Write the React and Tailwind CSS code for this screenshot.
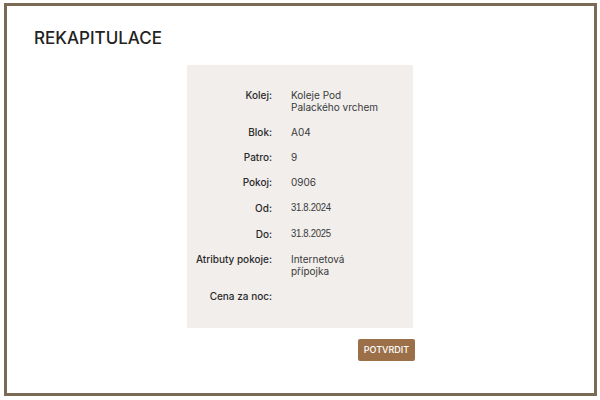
import React from 'react';

const rows = [
  { label: 'Kolej:', value: ['Koleje Pod', 'Palackého vrchem'] },
  { label: 'Blok:', value: ['A04'] },
  { label: 'Patro:', value: ['9'] },
  { label: 'Pokoj:', value: ['0906'] },
  { label: 'Od:', value: ['31.8.2024'], date: true },
  { label: 'Do:', value: ['31.8.2025'], date: true },
  { label: 'Atributy pokoje:', value: ['Internetová', 'přípojka'] },
  { label: 'Cena za noc:', value: [] },
];

export default function App() {
  return (
    <div className="w-[600px] h-[400px] bg-white pt-[3px] pl-[4px]" style={{ fontFamily: 'Inter, sans-serif' }}>
      <div className="w-[593px] h-[393px] border-[3px] border-[#7b6a55] bg-white flex flex-col">
        <h1 className="text-[17px] leading-[22px] font-medium text-[#222] ml-[27px] mt-[21px]">
          REKAPITULACE
        </h1>
        <div className="ml-[180px] mt-[16px] w-[226px] h-[263px] bg-[#f1eeec] pt-[24px] flex flex-col gap-[13px]">
          {rows.map(r => (
            <div key={r.label} className={`flex text-[10px] leading-[12px] ${r.date ? 'mt-[1px]' : ''}`}>
              <div className="w-[85px] text-right font-medium text-[#2a2a2a]">{r.label}</div>
              <div
                className="ml-[19px] text-[#3a3a3a]"
                style={r.date ? { fontFamily: '"Liberation Sans", sans-serif' } : undefined}
              >
                {r.value.map((v, i) => (
                  <div key={i} className={r.date ? 'tracking-[-0.3px] scale-x-95 origin-left' : ''}>{v}</div>
                ))}
              </div>
            </div>
          ))}
        </div>
        <div className="flex justify-end mt-[11px] mr-[179px]">
          <button className="w-[57px] h-[22px] rounded-[2px] bg-[#9b6f48] text-white text-[9px] font-medium">
            POTVRDIT
          </button>
        </div>
      </div>
    </div>
  );
}
